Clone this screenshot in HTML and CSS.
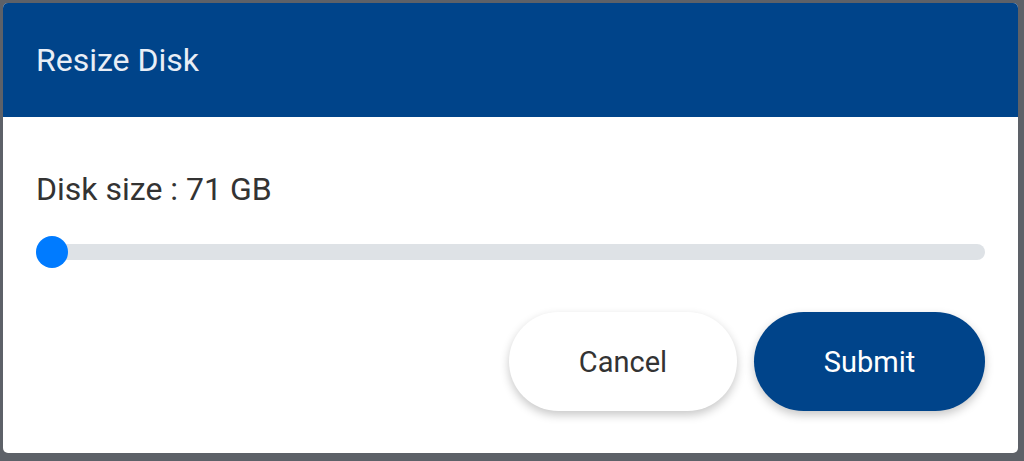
FILE: index.html
```html
<!DOCTYPE html>
<html lang="en">
<head>
<meta charset="utf-8">
<title>Resize Disk</title>
<link rel="stylesheet" href="styles.css">
</head>
<body>
<div class="backdrop">
  <div class="modal">
    <div class="modal-header">
      <h5 class="modal-title">Resize Disk</h5>
    </div>
    <div class="modal-body">
      <div class="label">Disk size : 71 GB</div>
      <div class="slider">
        <div class="thumb"></div>
      </div>
      <div class="footer">
        <button class="btn btn-cancel">Cancel</button>
        <button class="btn btn-submit">Submit</button>
      </div>
    </div>
  </div>
</div>
</body>
</html>
```
FILE: styles.css
```css
html, body {
  margin: 0;
  padding: 0;
  height: 100%;
}
body {
  background: #5d6168;
  font-family: Roboto, "Liberation Sans", Arial, sans-serif;
  overflow: hidden;
}
.backdrop {
  padding: 3px 6px 0 3px;
}
.modal {
  width: 1015px;
  height: 450px;
  background: #ffffff;
  border-radius: 5px;
  overflow: hidden;
  display: flex;
  flex-direction: column;
}
.modal-header {
  background: #00448a;
  height: 114px;
  box-sizing: border-box;
  padding: 38px 33px;
}
.modal-title {
  margin: 0;
  font-size: 32px;
  line-height: 38px;
  font-weight: 400;
  color: #e9eef6;
}
.modal-body {
  padding: 53px 33px 0 33px;
  display: flex;
  flex-direction: column;
}
.label {
  font-size: 32px;
  line-height: 38px;
  color: #333333;
}
.slider {
  margin-top: 36px;
  height: 16px;
  border-radius: 8px;
  background: #dee2e6;
  display: flex;
  align-items: center;
}
.thumb {
  width: 32px;
  height: 32px;
  border-radius: 50%;
  background: #007bff;
  flex: none;
}
.footer {
  margin-top: 52px;
  display: flex;
  justify-content: flex-end;
  gap: 17px;
}
.btn {
  width: 228px;
  height: 99px;
  border: none;
  border-radius: 50px;
  font-family: Roboto, "Liberation Sans", Arial, sans-serif;
  font-size: 29px;
  padding: 0;
  box-shadow: 0 4px 10px rgba(0, 0, 0, 0.22);
  cursor: pointer;
}
.btn-cancel {
  background: #ffffff;
  color: #333333;
}
.btn-submit {
  background: #00448a;
  color: #ffffff;
  width: 231px;
}
```
